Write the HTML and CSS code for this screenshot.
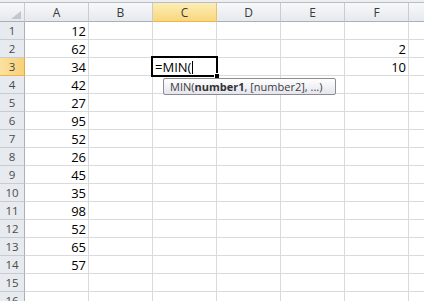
FILE: index.html
```html
<!DOCTYPE html>
<html>
<head>
<meta charset="utf-8">
<link rel="stylesheet" href="styles.css">
</head>
<body>
<div class="top"></div>
<div class="grid">
  <div class="h corner"><svg class="tri" width="10" height="8" viewBox="0 0 10 8"><polygon points="10,0 10,8 0,8" fill="#c3c7cd"/></svg></div>
  <div class="h">A</div><div class="h">B</div><div class="h hs">C</div><div class="h">D</div><div class="h">E</div><div class="h">F</div><div class="h last"></div>

  <div class="rh">1</div><div class="n">12</div><div></div><div></div><div></div><div></div><div></div><div class="last"></div>
  <div class="rh">2</div><div class="n">62</div><div></div><div></div><div></div><div></div><div class="n">2</div><div class="last"></div>
  <div class="rh rs">3</div><div class="n">34</div><div></div>
  <div class="active"><span class="ftext">=MIN(</span><span class="caret"></span>
    <div class="selbox"><span class="handle"></span></div>
    <div class="tip">MIN(<b>number1</b>, [number2], ...)</div>
  </div>
  <div></div><div></div><div class="n">10</div><div class="last"></div>
  <div class="rh">4</div><div class="n">42</div><div></div><div></div><div></div><div></div><div></div><div class="last"></div>
  <div class="rh">5</div><div class="n">27</div><div></div><div></div><div></div><div></div><div></div><div class="last"></div>
  <div class="rh">6</div><div class="n">95</div><div></div><div></div><div></div><div></div><div></div><div class="last"></div>
  <div class="rh">7</div><div class="n">52</div><div></div><div></div><div></div><div></div><div></div><div class="last"></div>
  <div class="rh">8</div><div class="n">26</div><div></div><div></div><div></div><div></div><div></div><div class="last"></div>
  <div class="rh">9</div><div class="n">45</div><div></div><div></div><div></div><div></div><div></div><div class="last"></div>
  <div class="rh">10</div><div class="n">35</div><div></div><div></div><div></div><div></div><div></div><div class="last"></div>
  <div class="rh">11</div><div class="n">98</div><div></div><div></div><div></div><div></div><div></div><div class="last"></div>
  <div class="rh">12</div><div class="n">52</div><div></div><div></div><div></div><div></div><div></div><div class="last"></div>
  <div class="rh">13</div><div class="n">65</div><div></div><div></div><div></div><div></div><div></div><div class="last"></div>
  <div class="rh">14</div><div class="n">57</div><div></div><div></div><div></div><div></div><div></div><div class="last"></div>
  <div class="rh">15</div><div></div><div></div><div></div><div></div><div></div><div></div><div class="last"></div>
  <div class="rh">16</div><div></div><div></div><div></div><div></div><div></div><div></div><div class="last"></div>
</div>
</body>
</html>
```
FILE: styles.css
```css
html, body {
  margin: 0;
  padding: 0;
}
body {
  width: 424px;
  height: 301px;
  overflow: hidden;
  background: #fff;
  font-family: "Open Sans", "Liberation Sans", sans-serif;
  color: #000;
}
.top {
  height: 2px;
  background: #eceef1;
  border-bottom: 1px solid #b9bec6;
}
.grid {
  display: grid;
  grid-template-columns: 25px repeat(6, 64px) 1fr;
  grid-template-rows: 19px;
  grid-auto-rows: 18px;
}
.grid > div {
  box-sizing: border-box;
  border-right: 1px solid #d9dadc;
  border-bottom: 1px solid #d9dadc;
  min-width: 0;
}
.grid > .last {
  border-right: none;
}
.h {
  background: linear-gradient(#f7f8fa, #e6e9ed);
  border-right-color: #c8ccd2 !important;
  border-bottom-color: #a9b0b9 !important;
  display: flex;
  align-items: center;
  justify-content: center;
  font-size: 12px;
  color: #3a3a3a;
  padding-top: 1px;
}
.corner {
  position: relative;
  justify-content: flex-end;
  align-items: flex-end;
  padding: 0 3px 2px 0;
}
.tri {
  display: block;
}
.hs {
  background: linear-gradient(#fdeeb6, #f8d77d);
  border-right-color: #e7c26a !important;
  border-bottom-color: #f0b44a !important;
}
.rh {
  background: #e7eaee;
  border-right-color: #a9b0b9 !important;
  border-bottom-color: #c8ccd2 !important;
  display: flex;
  align-items: center;
  justify-content: center;
  font-size: 11.5px;
  color: #4a4a4a;
}
.rs {
  background: linear-gradient(90deg, #fae2a0, #f7d17a);
  border-bottom-color: #f0b44a !important;
  border-right-color: #e3a93c !important;
}
.n {
  display: flex;
  justify-content: flex-end;
  align-items: flex-end;
  padding-right: 2px;
  font-size: 13px;
  line-height: 15px;
}
.active {
  position: relative;
  display: flex;
  align-items: flex-end;
  padding-left: 2px;
  font-size: 13px;
  line-height: 15px;
}
.caret {
  display: inline-block;
  width: 1px;
  height: 13px;
  background: #000;
  margin-left: 1px;
  margin-bottom: 1px;
}
.selbox {
  position: absolute;
  left: -2px;
  top: -2px;
  right: -2px;
  bottom: -2px;
  border: 2px solid #000;
}
.handle {
  position: absolute;
  right: -3px;
  bottom: -3px;
  width: 4px;
  height: 4px;
  background: #000;
  border-left: 1px solid #fff;
  border-top: 1px solid #fff;
}
.tip {
  position: absolute;
  left: 10px;
  top: 20px;
  width: 173px;
  height: 17px;
  box-sizing: border-box;
  border: 1px solid #8a8c90;
  border-radius: 2px;
  background: linear-gradient(#ffffff, #e4e5ee);
  font-size: 11px;
  line-height: 15px;
  color: #3c3c3c;
  padding-left: 6px;
  white-space: nowrap;
  z-index: 2;
}
.tip b {
  font-weight: 700;
  color: #333;
}
```
